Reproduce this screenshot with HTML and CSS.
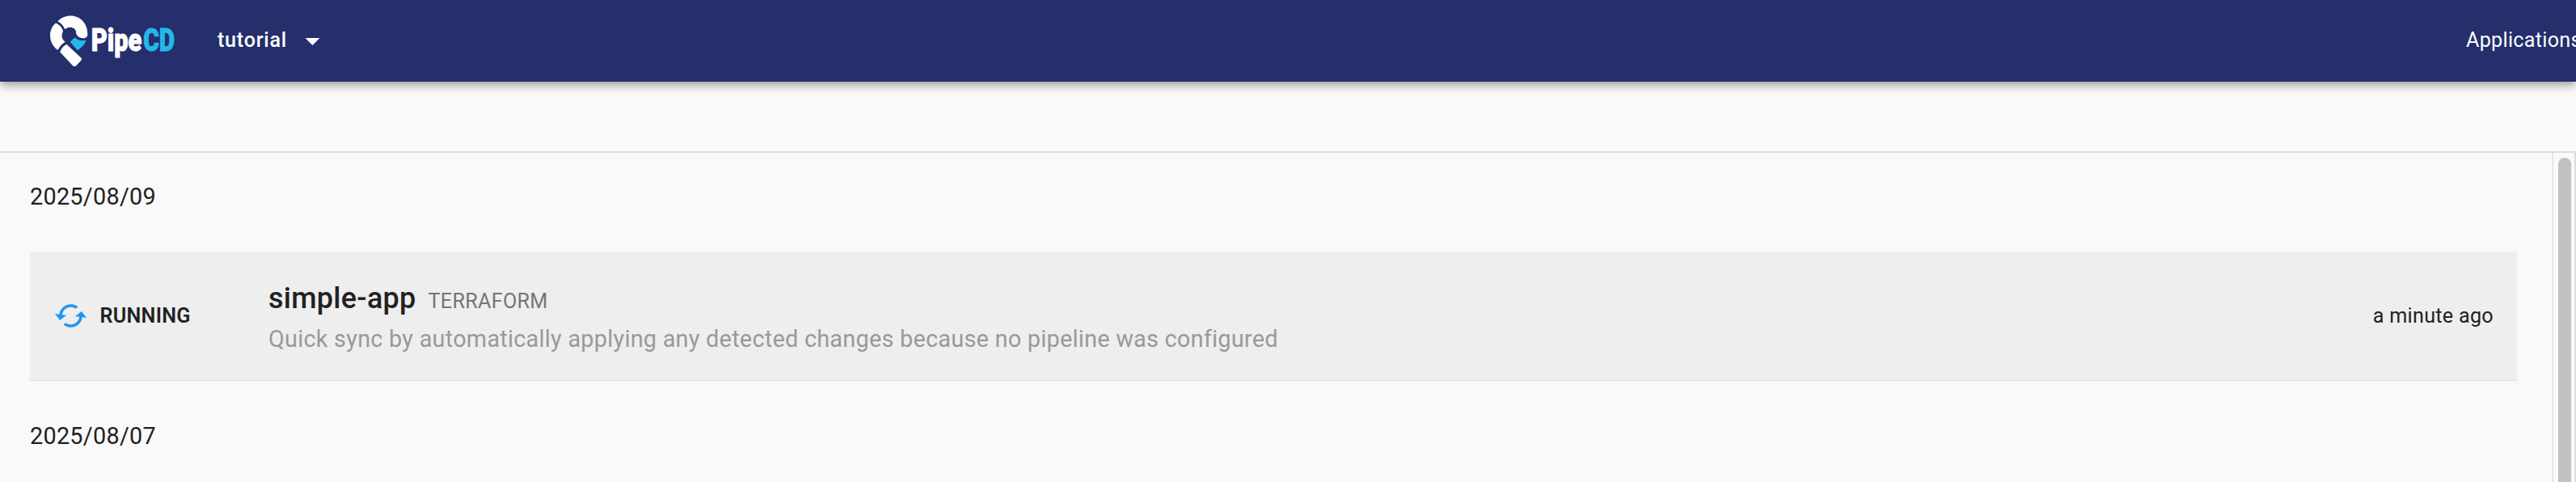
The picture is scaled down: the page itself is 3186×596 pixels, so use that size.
FILE: index.html
```
<!DOCTYPE html>
<html lang="en">
<head>
    <meta charset="UTF-8">
    <meta name="viewport" content="width=device-width, initial-scale=1.0">
    <title>PipeCD</title>
    <link rel="stylesheet" href="styles.css">
</head>
<body>

    <header class="header">
        <div class="logo">
            <svg class="logo-mark" viewBox="0 0 150 200">
                <path fill="#fff" d="M31 28 C45 13 61 7 79 7 C115 7 142 35 142 75 C142 84 137 90 125 90 C108 90 99 78 99 67 C99 57 88 50 77 50 C70 50 63 53 58 57 C53 45 44 34 31 28 Z"/>
                <path fill="#fff" d="M24 34 C38 40 47 49 51 64 C43 82 47 94 59 104 C48 111 38 121 32 134 C14 123 3 102 3 78 C3 61 12 43 24 34 Z"/>
                <path fill="#fff" d="M64 113 L118 163 Q123 168 118 173 L99 193 Q93 198 88 193 L40 142 C44 129 52 119 64 113 Z"/>
                <path fill="#25b7ea" d="M77 104 L95 87 C105 98 120 101 137 97 C132 113 120 124 105 135 Z"/>
            </svg>
            <svg class="logo-name" viewBox="0 0 320 200">
                <g transform="scale(0.815 1)">
                    <text class="logo-text" x="6" y="137" textLength="230" lengthAdjust="spacingAndGlyphs">Pipe</text>
                    <text class="logo-text logo-cd" x="243" y="137" textLength="143" lengthAdjust="spacingAndGlyphs">CD</text>
                </g>
            </svg>
        </div>
        <button class="project">
            <span class="project-name">tutorial</span>
            <svg class="project-arrow" viewBox="0 0 24 24"><path d="M7 10l5 5 5-5z"/></svg>
        </button>
        <nav class="nav">
            <a class="nav-link">Applications</a>
        </nav>
    </header>

    <div class="toolbar"></div>

    <div class="content">
        <main class="list">
            <h2 class="date">2025/08/09</h2>
            <div class="deployment">
                <div class="status">
                    <svg class="status-icon" viewBox="0 0 24 24">
                        <path d="M19 8l-4 4h3c0 3.31-2.69 6-6 6-1.01 0-1.97-.25-2.8-.7l-1.46 1.46C8.97 19.54 10.43 20 12 20c4.42 0 8-3.58 8-8h3l-4-4zM6 12c0-3.31 2.69-6 6-6 1.01 0 1.97.25 2.8.7l1.46-1.46C15.03 4.46 13.57 4 12 4c-4.42 0-8 3.58-8 8H1l4 4 4-4H6z"/>
                    </svg>
                    <span class="status-text">RUNNING</span>
                </div>
                <div class="info">
                    <div class="title">
                        <span class="app-name">simple-app</span>
                        <span class="app-kind">TERRAFORM</span>
                    </div>
                    <p class="description">Quick sync by automatically applying any detected changes because no pipeline was configured</p>
                </div>
                <span class="time">a minute ago</span>
            </div>
            <h2 class="date">2025/08/07</h2>
        </main>
        <div class="scrollbar">
            <div class="scrollbar-thumb"></div>
        </div>
        <div class="edge"></div>
    </div>

</body>
</html>
```
FILE: styles.css
```
* {
    box-sizing: border-box;
    margin: 0;
    padding: 0;
}

body {
    display: flex;
    flex-direction: column;
    height: 100vh;
    overflow: hidden;
    background: #f9f9f9;
    color: #212121;
    font-family: Roboto, sans-serif;
    font-size: 25.2px;
    letter-spacing: 0.01071em;
}

/* Header */
.header {
    display: flex;
    align-items: center;
    flex: none;
    position: relative;
    height: 101px;
    padding-left: 61px;
    background: #242f6c;
    color: #fff;
    box-shadow: 0 3.6px 7.2px -1.8px rgba(0, 0, 0, 0.2),
        0 7.2px 9px rgba(0, 0, 0, 0.14),
        0 1.8px 18px rgba(0, 0, 0, 0.12);
}

.logo {
    display: flex;
    width: 160px;
    height: 67px;
}

.logo-mark {
    width: 50px;
    height: 67px;
}

.logo-name {
    width: 107px;
    height: 67px;
    overflow: visible;
}

.logo-text {
    font-size: 117px;
    font-weight: 900;
    letter-spacing: 0;
    fill: #fff;
    stroke: #fff;
    stroke-width: 3px;
}

.logo-cd {
    fill: #25b7ea;
    stroke: #25b7ea;
}

.project {
    display: flex;
    align-items: center;
    gap: 10px;
    margin-left: 48px;
    border: none;
    background: none;
    color: #fff;
    font: inherit;
    font-weight: 500;
    line-height: 43px;
    letter-spacing: 0.02857em;
}

.project-name {
    padding-bottom: 2px;
}

.project-arrow {
    width: 43px;
    height: 43px;
    fill: #fff;
}

.nav {
    width: 136px;
    margin-left: auto;
    padding-bottom: 2px;
    white-space: nowrap;
}

.nav-link {
    letter-spacing: 0.01071em;
}

/* Filter bar */
.toolbar {
    flex: none;
    height: 88px;
    border-bottom: 2px solid #dcdcdc;
}

/* Deployment list */
.content {
    display: flex;
    flex: 1;
    min-height: 0;
}

.list {
    flex: 1;
    padding: 33px 43px 0 37px;
}

.date {
    font-size: 28.8px;
    font-weight: 400;
    line-height: 43px;
    letter-spacing: 0.00938em;
}

.deployment {
    display: flex;
    align-items: center;
    height: 160px;
    margin: 46px 0 47px;
    padding: 0 29px;
    background: #eee;
    border-bottom: 1px solid #dcdcdc;
}

.status {
    display: flex;
    align-items: center;
    gap: 14.4px;
    width: 266px;
}

.status-icon {
    width: 43px;
    height: 43px;
    fill: #2196f3;
    transform: rotate(7deg);
}

.status-text {
    font-weight: 600;
}

.info {
    flex: 1;
}

.title {
    display: flex;
    align-items: baseline;
    gap: 15px;
}

.app-name {
    font-size: 36px;
    font-weight: 500;
    line-height: 57px;
    letter-spacing: 0.0075em;
}

.app-kind {
    color: #757575;
}

.description {
    color: #999;
    font-size: 28.8px;
    line-height: 43px;
    letter-spacing: 0.00938em;
}

/* Scrollbar */
.scrollbar {
    width: 28px;
    padding: 6px 4px 0 6px;
    border-left: 2px solid #e6e6e6;
}

.scrollbar-thumb {
    width: 16px;
    height: 100%;
    border-radius: 8px 8px 0 0;
    background: #c1c1c1;
}

.edge {
    width: 2px;
    background: #dcdcdc;
}
```
